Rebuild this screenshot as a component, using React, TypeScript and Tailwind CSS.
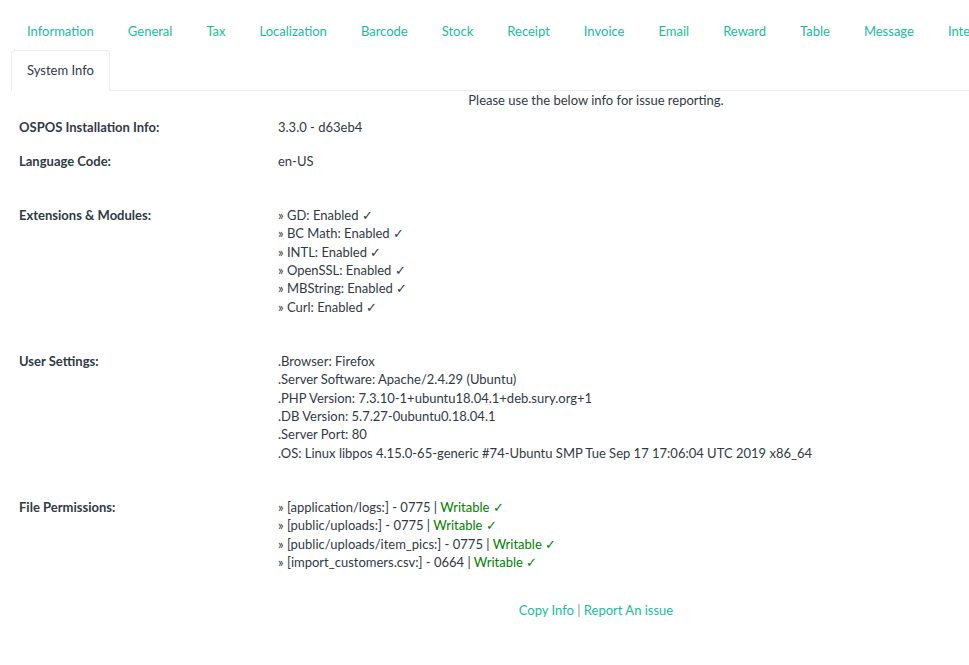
import type { ReactElement } from 'react';

const tabs = [
	'Information',
	'General',
	'Tax',
	'Localization',
	'Barcode',
	'Stock',
	'Receipt',
	'Invoice',
	'Email',
	'Reward',
	'Table',
	'Message',
	'Integrations',
];

const extensions = ['GD', 'BC Math', 'INTL', 'OpenSSL', 'MBString', 'Curl'];

const settings = [
	'.Browser: Firefox',
	'.Server Software: Apache/2.4.29 (Ubuntu)',
	'.PHP Version: 7.3.10-1+ubuntu18.04.1+deb.sury.org+1',
	'.DB Version: 5.7.27-0ubuntu0.18.04.1',
	'.Server Port: 80',
	'.OS: Linux libpos 4.15.0-65-generic #74-Ubuntu SMP Tue Sep 17 17:06:04 UTC 2019 x86_64',
];

const permissions = [
	['application/logs:', '0775'],
	['public/uploads:', '0775'],
	['public/uploads/item_pics:', '0775'],
	['import_customers.csv:', '0664'],
];

const Row = ({ label, children, className = '' }: { label: string; children: ReactElement | ReactElement[] | string; className?: string }) => (
	<div className={`flex ${className}`}>
		<div className="w-[267px] shrink-0 pl-[8px] font-bold">{label}</div>
		<div>{children}</div>
	</div>
);

export default function App(): ReactElement {
	return (
		<div className="w-full overflow-x-hidden bg-white">
			<div
				className="w-[1170px] ml-[11px] pt-[11px] text-[13px] leading-[18.4px] text-[#2f3a45]"
				style={{ fontFamily: 'Lato, "Noto Sans", sans-serif' }}
			>
				<ul className="flex flex-wrap w-[1060px] border-b border-[#ececec]">
					{tabs.map((t) => (
						<li key={t} className="mr-[2px] -mb-px">
							<a className="block px-[15px] py-[10px] border border-transparent text-[#18bc9c] cursor-pointer">
								{t}
							</a>
						</li>
					))}
					<li className="mr-[2px] -mb-px">
						<a className="block px-[15px] py-[10px] border border-[#ececec] border-b-white rounded-t-[4px] bg-white">
							System Info
						</a>
					</li>
				</ul>
				<div className="w-[1170px] border-t border-[#ececec] -mt-px" />

				<p className="text-center mb-[8.6px]">Please use the below info for issue reporting.</p>

				<Row label="OSPOS Installation Info:" className="mb-[15.6px]">
					3.3.0 - d63eb4
				</Row>
				<Row label="Language Code:" className="mb-[35.6px]">
					en-US
				</Row>
				<Row label="Extensions & Modules:" className="mb-[35.6px]">
					{extensions.map((e) => (
						<div key={e}>» {e}: Enabled ✓</div>
					))}
				</Row>
				<Row label="User Settings:" className="mb-[35.6px]">
					{settings.map((s) => (
						<div key={s}>{s}</div>
					))}
				</Row>
				<Row label="File Permissions:" className="mb-[29.6px]">
					{permissions.map(([p, m]) => (
						<div key={p}>
							» [{p}] - {m} | <span className="text-[#008000]">Writable ✓</span>
						</div>
					))}
				</Row>

				<p className="text-center pb-[40px]">
					<a className="text-[#18bc9c] cursor-pointer">Copy Info</a>
					<span className="text-[#8a9aa0]"> | </span>
					<a className="text-[#18bc9c] cursor-pointer">Report An issue</a>
				</p>
			</div>
		</div>
	);
}
